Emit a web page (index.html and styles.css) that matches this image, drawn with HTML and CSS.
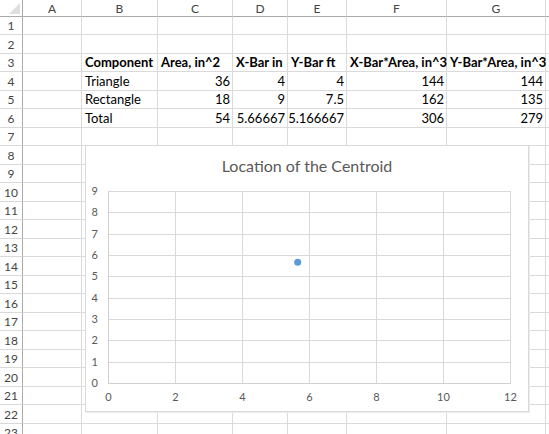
FILE: index.html
```html
<!DOCTYPE html>
<html>
<head>
<meta charset="utf-8">
<link rel="stylesheet" href="styles.css">
</head>
<body>
<div class="sheet">
  <div class="corner"><span class="tri"></span></div>
  <div class="h">A</div><div class="h">B</div><div class="h">C</div><div class="h">D</div><div class="h">E</div><div class="h">F</div><div class="h">G</div><div class="h"></div>

  <div class="r">1</div><div class="c"></div><div class="c"></div><div class="c"></div><div class="c"></div><div class="c"></div><div class="c"></div><div class="c"></div><div class="c"></div>
  <div class="r">2</div><div class="c"></div><div class="c"></div><div class="c"></div><div class="c"></div><div class="c"></div><div class="c"></div><div class="c"></div><div class="c"></div>
  <div class="r">3</div><div class="c"></div><div class="c b">Component</div><div class="c b">Area, in^2</div><div class="c b">X-Bar in</div><div class="c b">Y-Bar ft</div><div class="c b">X-Bar*Area, in^3</div><div class="c b">Y-Bar*Area, in^3</div><div class="c"></div>
  <div class="r">4</div><div class="c"></div><div class="c">Triangle</div><div class="c n">36</div><div class="c n">4</div><div class="c n">4</div><div class="c n">144</div><div class="c n">144</div><div class="c"></div>
  <div class="r">5</div><div class="c"></div><div class="c">Rectangle</div><div class="c n">18</div><div class="c n">9</div><div class="c n">7.5</div><div class="c n">162</div><div class="c n">135</div><div class="c"></div>
  <div class="r">6</div><div class="c"></div><div class="c">Total</div><div class="c n">54</div><div class="c n">5.66667</div><div class="c n">5.166667</div><div class="c n">306</div><div class="c n">279</div><div class="c"></div>
  <div class="r">7</div><div class="c"></div><div class="c"></div><div class="c"></div><div class="c"></div><div class="c"></div><div class="c"></div><div class="c"></div><div class="c"></div>
  <div class="r">8</div><div class="c"></div><div class="c"></div><div class="c"></div><div class="c"></div><div class="c"></div><div class="c"></div><div class="c"></div><div class="c"></div>
  <div class="r">9</div><div class="c"></div><div class="c"></div><div class="c"></div><div class="c"></div><div class="c"></div><div class="c"></div><div class="c"></div><div class="c"></div>
  <div class="r">10</div><div class="c"></div><div class="c"></div><div class="c"></div><div class="c"></div><div class="c"></div><div class="c"></div><div class="c"></div><div class="c"></div>
  <div class="r">11</div><div class="c"></div><div class="c"></div><div class="c"></div><div class="c"></div><div class="c"></div><div class="c"></div><div class="c"></div><div class="c"></div>
  <div class="r">12</div><div class="c"></div><div class="c"></div><div class="c"></div><div class="c"></div><div class="c"></div><div class="c"></div><div class="c"></div><div class="c"></div>
  <div class="r">13</div><div class="c"></div><div class="c"></div><div class="c"></div><div class="c"></div><div class="c"></div><div class="c"></div><div class="c"></div><div class="c"></div>
  <div class="r">14</div><div class="c"></div><div class="c"></div><div class="c"></div><div class="c"></div><div class="c"></div><div class="c"></div><div class="c"></div><div class="c"></div>
  <div class="r">15</div><div class="c"></div><div class="c"></div><div class="c"></div><div class="c"></div><div class="c"></div><div class="c"></div><div class="c"></div><div class="c"></div>
  <div class="r">16</div><div class="c"></div><div class="c"></div><div class="c"></div><div class="c"></div><div class="c"></div><div class="c"></div><div class="c"></div><div class="c"></div>
  <div class="r">17</div><div class="c"></div><div class="c"></div><div class="c"></div><div class="c"></div><div class="c"></div><div class="c"></div><div class="c"></div><div class="c"></div>
  <div class="r">18</div><div class="c"></div><div class="c"></div><div class="c"></div><div class="c"></div><div class="c"></div><div class="c"></div><div class="c"></div><div class="c"></div>
  <div class="r">19</div><div class="c"></div><div class="c"></div><div class="c"></div><div class="c"></div><div class="c"></div><div class="c"></div><div class="c"></div><div class="c"></div>
  <div class="r">20</div><div class="c"></div><div class="c"></div><div class="c"></div><div class="c"></div><div class="c"></div><div class="c"></div><div class="c"></div><div class="c"></div>
  <div class="r">21</div><div class="c"></div><div class="c"></div><div class="c"></div><div class="c"></div><div class="c"></div><div class="c"></div><div class="c"></div><div class="c"></div>
  <div class="r">22</div><div class="c"></div><div class="c"></div><div class="c"></div><div class="c"></div><div class="c"></div><div class="c"></div><div class="c"></div><div class="c"></div>
  <div class="r">23</div><div class="c"></div><div class="c"></div><div class="c"></div><div class="c"></div><div class="c"></div><div class="c"></div><div class="c"></div><div class="c"></div>

  <div class="chart">
    <svg class="chart-svg" width="444" height="267" viewBox="0 0 444 267">
      <text class="title" x="222" y="27">Location of the Centroid</text>
      <g class="grid">
        <line x1="23" y1="46.5" x2="426" y2="46.5"/>
        <line x1="23" y1="67.5" x2="426" y2="67.5"/>
        <line x1="23" y1="89.5" x2="426" y2="89.5"/>
        <line x1="23" y1="110.5" x2="426" y2="110.5"/>
        <line x1="23" y1="131.5" x2="426" y2="131.5"/>
        <line x1="23" y1="153.5" x2="426" y2="153.5"/>
        <line x1="23" y1="174.5" x2="426" y2="174.5"/>
        <line x1="23" y1="195.5" x2="426" y2="195.5"/>
        <line x1="23" y1="217.5" x2="426" y2="217.5"/>
        <line x1="90.5" y1="46" x2="90.5" y2="238"/>
        <line x1="157.5" y1="46" x2="157.5" y2="238"/>
        <line x1="224.5" y1="46" x2="224.5" y2="238"/>
        <line x1="291.5" y1="46" x2="291.5" y2="238"/>
        <line x1="358.5" y1="46" x2="358.5" y2="238"/>
        <line x1="425.5" y1="46" x2="425.5" y2="238"/>
      </g>
      <g class="axis">
        <line x1="23.5" y1="46" x2="23.5" y2="239"/>
        <line x1="23" y1="238.5" x2="426" y2="238.5"/>
      </g>
      <g class="ylab">
        <text x="13" y="50">9</text>
        <text x="13" y="71">8</text>
        <text x="13" y="93">7</text>
        <text x="13" y="114">6</text>
        <text x="13" y="135">5</text>
        <text x="13" y="157">4</text>
        <text x="13" y="178">3</text>
        <text x="13" y="199">2</text>
        <text x="13" y="221">1</text>
        <text x="13" y="242">0</text>
      </g>
      <g class="xlab">
        <text x="23.5" y="256">0</text>
        <text x="90.5" y="256">2</text>
        <text x="157.5" y="256">4</text>
        <text x="224.5" y="256">6</text>
        <text x="291.5" y="256">8</text>
        <text x="358.5" y="256">10</text>
        <text x="425.5" y="256">12</text>
      </g>
      <circle class="pt" cx="212.7" cy="117.3" r="3.5"/>
    </svg>
  </div>
</div>
</body>
</html>
```

FILE: styles.css
```css
html, body {
  margin: 0;
  padding: 0;
  background: #fff;
}
body {
  width: 549px;
  height: 434px;
  overflow: hidden;
  font-family: Lato, "Liberation Sans", sans-serif;
}
.sheet {
  position: relative;
  width: 549px;
  height: 434px;
  overflow: hidden;
  display: grid;
  grid-template-columns: 23px 59px 76px 75px 55px 59px 100px 99px 1fr;
  grid-template-rows: 17px 18px repeat(11, 19px 18px);
}
.sheet > div {
  box-sizing: border-box;
}
.corner {
  position: relative;
  border-right: 1px solid #ababab;
  border-bottom: 1px solid #ababab;
}
.tri {
  position: absolute;
  right: 2px;
  bottom: 2px;
  width: 0;
  height: 0;
  border-left: 11px solid transparent;
  border-bottom: 11px solid #dfdfdf;
}
.h {
  border-right: 1px solid #d9d9d9;
  border-bottom: 1px solid #ababab;
  color: #444;
  font-size: 12px;
  display: flex;
  align-items: center;
  justify-content: center;
  padding-top: 1px;
}
.r {
  border-right: 1px solid #ababab;
  border-bottom: 1px solid #d9d9d9;
  color: #444;
  font-size: 12px;
  display: flex;
  align-items: flex-end;
  justify-content: center;
  padding-bottom: 1px;
  line-height: 14px;
}
.c {
  border-right: 1px solid #dadada;
  border-bottom: 1px solid #dadada;
  font-size: 13px;
  color: #000;
  display: flex;
  align-items: flex-end;
  padding: 0 2px 1px 3px;
  line-height: 15px;
  white-space: nowrap;
}
.b {
  font-weight: bold;
}
.n {
  justify-content: flex-end;
}
.chart {
  position: absolute;
  left: 85px;
  top: 145px;
  width: 444px;
  height: 267px;
  background: #fff;
  box-shadow: inset 0 0 0 1px #d9d9d9, 1px 1px 0 #ececec;
}
.chart-svg {
  display: block;
}
.title {
  font-family: Lato, "Liberation Sans", sans-serif;
  font-size: 16px;
  fill: #595959;
  text-anchor: middle;
}
.grid line {
  stroke: #d9d9d9;
  stroke-width: 1;
}
.axis line {
  stroke: #d0d0d0;
  stroke-width: 1;
}
.ylab text, .xlab text {
  font-family: Lato, "Liberation Sans", sans-serif;
  font-size: 11px;
  fill: #595959;
}
.ylab text {
  text-anchor: end;
}
.xlab text {
  text-anchor: middle;
}
.pt {
  fill: #5b9bd5;
}
```
